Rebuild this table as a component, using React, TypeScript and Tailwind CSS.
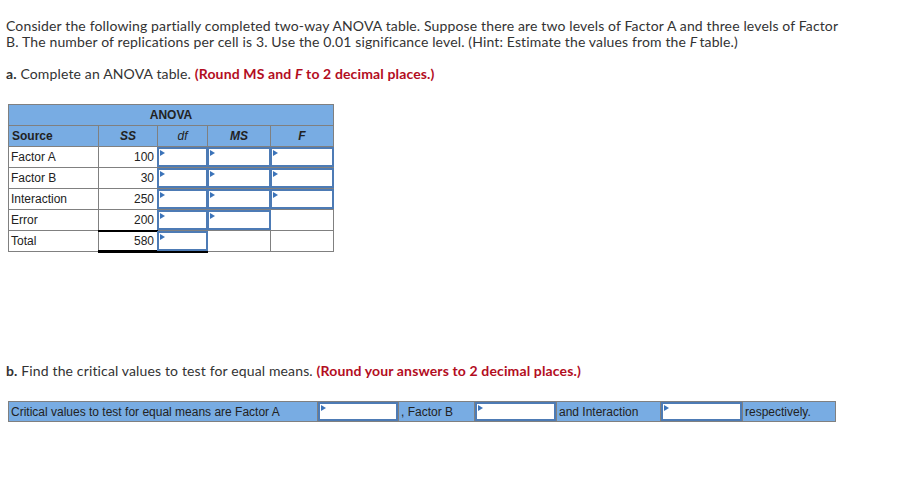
import React from "react";

const rows = [
  { source: "Factor A", ss: "100", ms: true, f: true },
  { source: "Factor B", ss: "30", ms: true, f: true },
  { source: "Interaction", ss: "250", ms: true, f: true },
  { source: "Error", ss: "200", ms: true, f: false },
];

function Tri() {
  return (
    <span className="absolute left-[1px] top-[1px] w-0 h-0 border-t-[3px] border-b-[3px] border-l-[5px] border-t-transparent border-b-transparent border-l-[#3b73b9]" />
  );
}

function InputCell({ className = "" }: { className?: string }) {
  return (
    <td className={`relative p-0 border border-[#808080] bg-white ${className}`}>
      <div className="relative h-[20px] border-2 border-[#4d7bb5] -m-[1px]">
        <Tri />
      </div>
    </td>
  );
}

export default function App() {
  return (
    <div className="w-[919px] h-[479px] bg-white text-[#333] font-['Lato','Open_Sans',sans-serif]">
      <div className="pl-[6px] pt-[18px] text-[14px] leading-[16px] tracking-[0.01em]">
        <p className="w-[842px]">
          Consider the following partially completed two-way ANOVA table. Suppose there are two levels of Factor A and three levels of Factor B. The number of replications per cell is 3. Use the 0.01 significance level. (Hint: Estimate the values from the <i className="pr-[2px]">F</i>table.)
        </p>
        <p className="mt-[16px]">
          <b>a.</b> Complete an ANOVA table.{" "}
          <b className="text-[#b30d1e]">
            (Round MS and <i>F</i> to 2 decimal places.)
          </b>
        </p>
      </div>

      <table className="ml-[8px] mt-[22px] border-collapse text-[12px] leading-[14px] font-['Liberation_Sans',Arial,sans-serif] text-[#222]">
        <thead>
          <tr className="bg-[#78ace3]">
            <th colSpan={5} className="h-[21px] border border-[#808080] font-bold text-center">
              ANOVA
            </th>
          </tr>
          <tr className="bg-[#78ace3]">
            <th className="w-[90px] h-[21px] border border-[#808080] text-left pl-[3px] font-bold">Source</th>
            <th className="w-[59px] border border-[#808080] italic font-bold">SS</th>
            <th className="w-[50px] border border-[#808080] italic font-normal">df</th>
            <th className="w-[63px] border border-[#808080] italic font-bold">MS</th>
            <th className="w-[63px] border border-[#808080] italic font-bold">F</th>
          </tr>
        </thead>
        <tbody>
          {rows.map((r) => (
            <tr key={r.source}>
              <td className="h-[21px] border border-[#808080] pl-[2px]">{r.source}</td>
              <td className="border border-[#808080] text-right pr-[3px]">{r.ss}</td>
              <InputCell />
              {r.ms ? <InputCell /> : <td className="border border-[#808080]" />}
              {r.f ? <InputCell /> : <td className="border border-[#808080]" />}
            </tr>
          ))}
          <tr>
            <td className="h-[21px] border border-[#808080] pl-[2px]">Total</td>
            <td className="border border-[#808080] border-t-2 border-t-black border-b-[3px] border-b-black text-right pr-[3px]">580</td>
            <InputCell className="border-b-[3px] border-b-black" />
            <td className="border border-[#808080]" />
            <td className="border border-[#808080]" />
          </tr>
        </tbody>
      </table>

      <p className="pl-[6px] mt-[110px] text-[14px] leading-[16px] tracking-[0.01em]">
        <b>b.</b> Find the critical values to test for equal means.{" "}
        <b className="text-[#b30d1e]">(Round your answers to 2 decimal places.)</b>
      </p>

      <div className="ml-[8px] mt-[22px] flex w-[828px] h-[21px] border border-[#808080] bg-[#78ace3] text-[12px] font-['Liberation_Sans',Arial,sans-serif] text-[#222]">
        <div className="w-[309px] pl-[2px] flex items-center border-r border-[#808080]">Critical values to test for equal means are Factor A</div>
        <div className="relative w-[80px] bg-white border-2 border-[#4d7bb5]"><Tri /></div>
        <div className="w-[77px] pl-[2px] flex items-center border-x border-[#808080]">, Factor B</div>
        <div className="relative w-[81px] bg-white border-2 border-[#4d7bb5]"><Tri /></div>
        <div className="w-[105px] pl-[2px] flex items-center border-x border-[#808080]">and Interaction</div>
        <div className="relative w-[81px] bg-white border-2 border-[#4d7bb5]"><Tri /></div>
        <div className="flex-1 pl-[2px] flex items-center border-l border-[#808080]">respectively.</div>
      </div>
    </div>
  );
}
